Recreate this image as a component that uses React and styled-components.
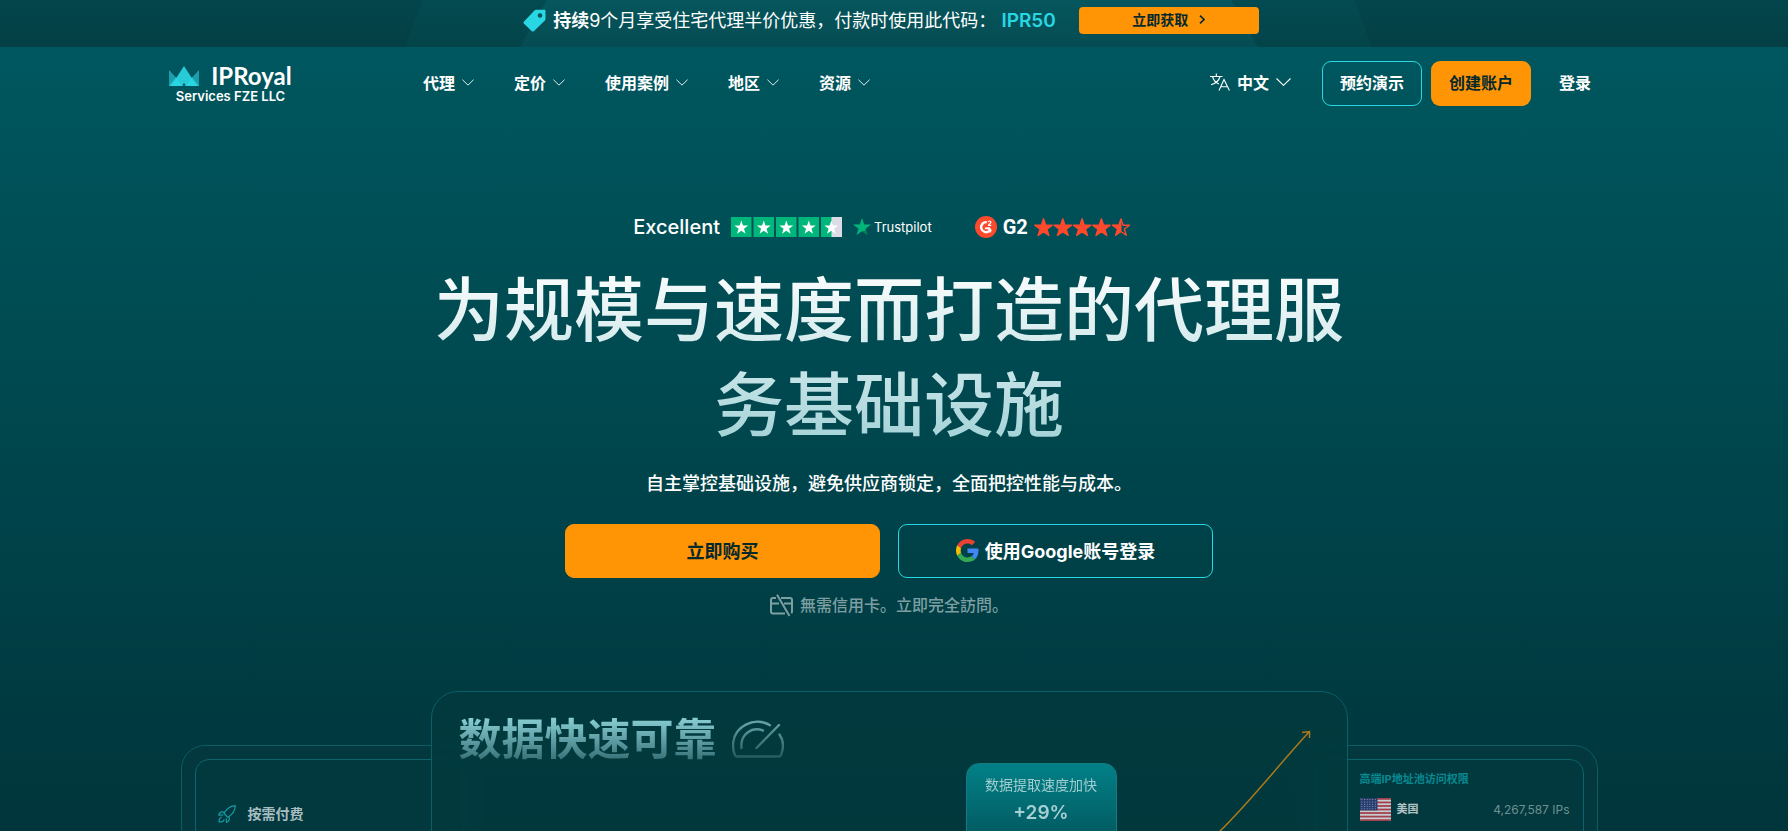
import React from 'react';
import styled, { createGlobalStyle } from 'styled-components';

const navItems = ['代理', '定价', '使用案例', '地区', '资源'];
const STAR = 'M0 -10 L2.3 -3.1 L9.5 -3.1 L3.7 1.2 L5.9 8.1 L0 3.9 L-5.9 8.1 L-3.7 1.2 L-9.5 -3.1 L-2.3 -3.1 Z';

const Chevron = ({ width = 12 }) => (
  <svg width={width} height={width === 12 ? 7 : 8} viewBox="0 0 15 8" fill="none" stroke="#fff" strokeWidth="1.1" aria-hidden="true">
    <path d="M.5 .5 7.5 7.3 14.5 .5" />
  </svg>
);

const TagIcon = () => (
  <svg width="23" height="23" viewBox="0 0 23 23" aria-hidden="true">
    <path
      fill="#28d7e3"
      fillRule="evenodd"
      d="M13 .7H21.5Q22.5 .7 22.5 1.7V10Q22.5 10.8 21.9 11.4L10.8 22.2Q9.8 23 8.800 22.2L.8 14.600Q0 13.600 .8 12.800L11.700 1.300Q12.300 .7 13 .7ZM17 4.200A2.300 2.300 0 1 0 17 8.800A2.300 2.300 0 1 0 17 4.200Z"
    />
  </svg>
);

const Crown = () => (
  <svg width="30" height="20" viewBox="0 0 30 20" aria-hidden="true">
    <path fill="#1b9dab" d="M0 4 15 20H0ZM30 4 15 20H30Z" />
    <path fill="#27cbd7" d="M15 0 28 20H17.5L15 17 12.500 20H2Z" />
    <path fill="#29dbe8" opacity=".7" d="M0 20 7 11.500 13 19.200 12.500 20ZM30 20 23 11.500 17 19.200 17.500 20Z" />
  </svg>
);

const TranslateIcon = () => (
  <svg width="20" height="18" viewBox="0 0 20 18" fill="none" stroke="#fff" strokeWidth="1.1" aria-hidden="true">
    <path d="M0 3.500H12.500M6.300 .5V3.500M2.500 3.500C3.600 7.500 6.500 10 9 11M10 3.500C9 7.500 5.500 10.500 1 11.800M9 17.500 14 6.500 19.400 17.500M10.800 13.800H17.600" />
  </svg>
);

const TrustpilotStars = () => (
  <svg width="111" height="20" viewBox="0 0 111 20" role="img" aria-label="4.5 / 5">
    {[0, 22.5, 45, 67.5, 90].map((x, i) => (
      <g key={x}>
        <rect x={x} width={i === 4 ? 11 : 20.5} height="20" fill="#00b67a" />
        {i === 4 && <rect x={x + 10.5} width="10.5" height="20" fill="#dcdce6" />}
        <path d={STAR} fill="#fff" transform={`translate(${x + 10.3} 10.8) scale(.73)`} />
      </g>
    ))}
  </svg>
);

const G2Logo = () => (
  <svg width="22" height="22" viewBox="0 0 22 22" aria-hidden="true">
    <circle cx="11" cy="11" r="11" fill="#ff492c" />
    <path d="M11.800 6.200A5 5 0 1 0 14.300 15" fill="none" stroke="#fff" strokeWidth="2.400" />
    <path d="M10.500 11.200H14.800L16.800 14.600 15.200 17 13 13.200H9.500Z" fill="#fff" />
    <path d="M13.200 6.200Q13.500 5 14.600 5 15.900 5 15.900 6.200 15.900 7 14.700 7.700 13.500 8.500 13.500 9.300H16.200" fill="none" stroke="#fff" strokeWidth="1.200" />
  </svg>
);

const G2Stars = () => (
  <svg width="97" height="20" viewBox="0 0 97 20" stroke="#ff492c" role="img" aria-label="4.5 / 5">
    {[9.5, 28.8, 48.1, 67.4].map((x) => (
      <path key={x} d={STAR} fill="#ff492c" strokeWidth="1.500" strokeLinejoin="round" transform={`translate(${x} 11) scale(.92)`} />
    ))}
    <g transform="translate(87 11) scale(.9)">
      <path d={STAR} fill="none" strokeWidth="1.500" strokeLinejoin="round" />
      <path d="M0 -10 V3.900 L-5.900 8.100 L-3.700 1.200 L-9.500 -3.100 L-2.300 -3.100 Z" fill="#ff492c" />
    </g>
  </svg>
);

const GoogleIcon = () => (
  <svg width="23" height="23" viewBox="0 0 48 48" aria-hidden="true">
    <path fill="#ea4335" d="M24 9.500c3.540 0 6.710 1.220 9.210 3.600l6.850-6.850C35.900 2.380 30.470 0 24 0 14.620 0 6.510 5.380 2.560 13.220l7.980 6.190C12.430 13.720 17.740 9.500 24 9.500z" />
    <path fill="#4285f4" d="M46.980 24.550c0-1.570-.15-3.090-.38-4.550H24v9.020h12.940c-.58 2.960-2.260 5.480-4.780 7.180l7.730 6c4.510-4.180 7.090-10.360 7.090-17.650z" />
    <path fill="#fbbc05" d="M10.530 28.590c-.48-1.450-.76-2.990-.76-4.590s.27-3.140.76-4.590l-7.980-6.190C.92 16.460 0 20.120 0 24s.92 7.540 2.560 10.780l7.970-6.190z" />
    <path fill="#34a853" d="M24 48c6.480 0 11.930-2.130 15.890-5.810l-7.730-6c-2.150 1.450-4.920 2.300-8.160 2.300-6.260 0-11.570-4.220-13.470-9.910l-7.980 6.190C6.510 42.620 14.620 48 24 48z" />
  </svg>
);

const NoCardIcon = () => (
  <svg width="23" height="23" viewBox="0 0 23 23" fill="none" stroke="currentColor" strokeWidth="2" aria-hidden="true">
    <path d="M6 4H3Q1 4 1 6V17.500Q1 19.500 3 19.500H15M11 4H20Q22 4 22 6V17.500Q22 18.500 21.300 19.200M1 9.500H9M14 9.500H22M7 .8 19.500 22" />
  </svg>
);

const GaugeIcon = () => (
  <svg width="52" height="38" viewBox="0 0 52 38" fill="none" stroke="url(#gauge)" strokeWidth="2.400" strokeLinecap="round" aria-hidden="true">
    <defs>
      <linearGradient id="gauge" x1="0" y1="0" x2="0" y2="38" gradientUnits="userSpaceOnUse">
        <stop stopColor="#68a6ab" />
        <stop offset="1" stopColor="#245a60" />
      </linearGradient>
    </defs>
    <path d="M38 5.200C23 -4 1 6 1 26Q1 31 3.200 35.500Q3.600 36.500 5 36.500H47Q48.400 36.500 48.800 35.500C52 28 52 21 47.500 14.500M9.500 28C8 14 20 6.500 31 10.500M24.500 28 47 5" />
  </svg>
);

const RocketIcon = () => (
  <svg width="18" height="18" viewBox="0 0 18 18" fill="none" stroke="#169ba4" strokeWidth="1.200" strokeLinejoin="round" aria-hidden="true">
    <path d="M6 8.500Q9.500 1.500 17.300 .7 17 8 9.800 12.200L6 8.500ZM6.600 7.500C4 6 1.500 7 .7 10.200L5.200 9.800M10.800 11.700C12 14 11 16.300 8.500 17.500L8.200 13.200M3.800 12C1.800 12.500 1 14.500 1 17 3.500 17 5.800 16.500 6.200 14.300" />
  </svg>
);

const Flag = () => (
  <svg width="31" height="23" viewBox="0 0 31 23" aria-hidden="true">
    <clipPath id="flag">
      <rect width="31" height="23" rx="2" />
    </clipPath>
    <g clipPath="url(#flag)">
      <rect width="31" height="23" fill="#c5cdd0" />
      {[0, 2, 4, 6, 8, 10, 12].map((i) => (
        <rect key={i} y={i * 1.77} width="31" height="1.77" fill="#a33e4c" />
      ))}
      <rect width="17.500" height="12.400" fill="#283e70" />
      {[0, 1, 2, 3, 4].map((r) =>
        [0, 1, 2, 3, 4, 5].map((c) => (
          <circle key={`${r}-${c}`} cx={1.8 + c * 2.7} cy={1.6 + r * 2.3} r=".5" fill="#9aa7bd" />
        ))
      )}
    </g>
  </svg>
);

const App = () => {
  return (
    <Page>
      <GlobalStyle />
      <Banner>
        <Promo>
          <TagIcon />
          <PromoText>
            <b>持续</b>9个月享受住宅代理半价优惠，付款时使用此代码： <Code>IPR50</Code>
          </PromoText>
        </Promo>
        <PromoButton type="button">
          立即获取
          <svg width="6" height="9" viewBox="0 0 6 9" fill="none" stroke="currentColor" strokeWidth="1.600" aria-hidden="true">
            <path d="M1 .7 5 4.500 1 8.300" />
          </svg>
        </PromoButton>
      </Banner>
      <Header>
        <Logo href="#">
          <LogoRow>
            <Crown />
            IPRoyal
          </LogoRow>
          <LogoSub>Services FZE LLC</LogoSub>
        </Logo>
        <Nav>
          {navItems.map((item) => (
            <NavButton type="button" key={item}>
              {item}
              <Chevron />
            </NavButton>
          ))}
        </Nav>
        <Language type="button">
          <TranslateIcon />
          中文
          <Chevron width={15} />
        </Language>
        <Actions>
          <SmallLink href="#" $outline>
            预约演示
          </SmallLink>
          <SmallLink href="#" $filled>
            创建账户
          </SmallLink>
          <SmallLink href="#">登录</SmallLink>
        </Actions>
      </Header>
      <Hero>
        <Ratings>
          <Trustpilot>
            <Excellent>Excellent</Excellent>
            <TrustpilotStars />
            <TrustpilotName>
              <svg width="18" height="18" viewBox="0 0 18 18" aria-hidden="true">
                <path d={STAR} fill="#00b67a" transform="translate(9 9.500) scale(.94)" />
                <path d="M9 13.200 12.900 12.200 14.500 17Z" fill="#005128" opacity=".5" />
              </svg>
              Trustpilot
            </TrustpilotName>
          </Trustpilot>
          <G2>
            <G2Logo />
            <span>G2</span>
            <G2Stars />
          </G2>
        </Ratings>
        <Title>为规模与速度而打造的代理服务基础设施</Title>
        <Subtitle>自主掌控基础设施，避免供应商锁定，全面把控性能与成本。</Subtitle>
        <Buttons>
          <BigButton type="button" $filled>
            立即购买
          </BigButton>
          <BigButton type="button">
            <GoogleIcon />
            使用Google账号登录
          </BigButton>
        </Buttons>
        <Note>
          <NoCardIcon />
          無需信用卡。立即完全訪問。
        </Note>
      </Hero>
      <Cards>
        <SideCard>
          <SideInner>
            <PlanRow>
              <RocketIcon />
              按需付费
            </PlanRow>
          </SideInner>
        </SideCard>
        <SideCard $right>
          <SideInner $right>
            <PoolTitle>高端IP地址池访问权限</PoolTitle>
            <Country>
              <Flag />
              <b>美国</b>
              <span>4,267,587 IPs</span>
            </Country>
          </SideInner>
        </SideCard>
        <MainCard>
          <MainTitle>
            <span>数据快速可靠</span>
            <GaugeIcon />
          </MainTitle>
          <Curve viewBox="0 0 300 210" fill="none" stroke="#aa7a1b" strokeWidth="1.500" aria-hidden="true">
            <path d="M1 207C90 190 160 147 207 102 236 74 264 38 297 2M290 2.500 297.500 1.500 297.500 8" />
          </Curve>
          <Tooltip>
            <span>数据提取速度加快</span>
            <strong>+29%</strong>
          </Tooltip>
        </MainCard>
      </Cards>
    </Page>
  );
};
export default App;

const GlobalStyle = createGlobalStyle`
  * {
    box-sizing: border-box;
  }
  body {
    margin: 0;
    background: #00353b;
    color: #fff;
    font-family: Inter, 'Noto Sans CJK SC', sans-serif;
  }
  button {
    font-family: inherit;
    color: inherit;
    cursor: pointer;
  }
  a {
    color: inherit;
    text-decoration: none;
  }
  svg {
    flex-shrink: 0;
  }
`;

const Page = styled.div`
  height: 100vh;
  overflow: hidden;
  padding-right: 10px;
  background: linear-gradient(180deg, #00575f 47px, #00353b 100%);
`;

const Banner = styled.div`
  position: relative;
  z-index: 0;
  display: flex;
  justify-content: center;
  gap: 23px;
  height: 47px;
  margin-right: -10px;
  padding: 7px 6px 0 0;
  background: linear-gradient(180deg, #03464c, #033f44);
  &::before,
  &::after {
    content: '';
    position: absolute;
    z-index: -1;
    top: 0;
    bottom: 0;
    left: calc(50% - 489px);
    width: 967px;
    background: linear-gradient(180deg, #034b51, #034449);
    clip-path: polygon(18px 0, calc(100% - 18px) 0, 100% 100%, 0 100%);
  }
  &::after {
    left: calc(50% - 374px);
    width: 738px;
    background: linear-gradient(180deg, #06565d, #054c52);
    clip-path: polygon(27px 0, calc(100% - 27px) 0, 100% 100%, 0 100%);
  }
`;

const Promo = styled.div`
  display: flex;
  align-items: center;
  gap: 7px;
  height: 27px;
`;

const PromoText = styled.span`
  font-size: 18px;
  line-height: 27px;
  white-space: nowrap;
`;

const Code = styled.b`
  color: #28d7e3;
  font-size: 19px;
  font-weight: 600;
`;

const PromoButton = styled.button`
  display: flex;
  align-items: center;
  justify-content: center;
  gap: 11px;
  width: 180px;
  height: 27px;
  padding: 0 0 3px;
  border: none;
  border-radius: 4px;
  background: #ff9404;
  color: #04292d;
  font-size: 14px;
  font-weight: 700;
`;

const Header = styled.header`
  display: flex;
  align-items: center;
  max-width: 1442px;
  height: 72px;
  margin: 0 auto;
  font-size: 16px;
  font-weight: 700;
`;

const Logo = styled.a`
  display: flex;
  flex-direction: column;
  align-items: center;
  width: 125px;
  padding-top: 1px;
`;

const LogoRow = styled.span`
  display: flex;
  align-items: center;
  gap: 12px;
  font-family: Lato, sans-serif;
  font-size: 24px;
  line-height: 24px;
`;

const LogoSub = styled.span`
  font-size: 13px;
  font-weight: 600;
  line-height: 16px;
`;

const Nav = styled.nav`
  display: flex;
  gap: 40px;
  margin-left: 130px;
  padding-bottom: 2px;
`;

const NavButton = styled.button`
  display: flex;
  align-items: center;
  gap: 7px;
  padding: 0;
  border: none;
  background: none;
  font-size: 16px;
  font-weight: 700;
`;

const Language = styled(NavButton)`
  margin-left: auto;
  margin-right: 31px;
  padding-bottom: 2px;
`;

const Actions = styled.div`
  display: flex;
  gap: 9px;
`;

const SmallLink = styled.a`
  display: flex;
  align-items: center;
  height: 45px;
  padding: 0 ${({ $outline, $filled }) => ($outline || $filled ? 17 : 18)}px 2px;
  border: 1px solid ${({ $outline }) => ($outline ? '#28d7e3' : 'transparent')};
  border-radius: 9px;
  background: ${({ $filled }) => ($filled ? '#ff9404 border-box' : 'none')};
  color: ${({ $filled }) => ($filled ? '#04292d' : '#fff')};
`;

const Hero = styled.main`
  display: flex;
  flex-direction: column;
  align-items: center;
  max-width: 915px;
  margin: 0 auto;
  padding-top: 96px;
`;

const Ratings = styled.div`
  display: flex;
  align-items: center;
  gap: 43px;
  height: 24px;
  margin-right: 14px;
`;

const Trustpilot = styled.div`
  display: flex;
  align-items: center;
  gap: 11px;
`;

const Excellent = styled.span`
  font-size: 20px;
  font-weight: 500;
`;

const TrustpilotName = styled.span`
  display: flex;
  align-items: center;
  gap: 3px;
  font-size: 13px;
`;

const G2 = styled.div`
  display: flex;
  align-items: center;
  gap: 6px;
  font-family: Roboto, sans-serif;
  font-size: 20px;
  font-weight: 700;
`;

const Title = styled.h1`
  margin: 24px 0 0;
  background: linear-gradient(180deg, #fff 0%, #9dd0d5 100%);
  background-clip: text;
  color: transparent;
  font-size: 70px;
  font-weight: 500;
  line-height: 95px;
  text-align: center;
`;

const Subtitle = styled.p`
  margin: 17px 0 0;
  font-size: 18px;
  font-weight: 500;
  line-height: 27px;
`;

const Buttons = styled.div`
  display: grid;
  grid-template-columns: 1fr 1fr;
  gap: 18px;
  width: 648px;
  margin-top: 27px;
`;

const BigButton = styled.button`
  display: flex;
  align-items: center;
  justify-content: center;
  gap: 6px;
  height: 54px;
  padding: 0 0 2px;
  border: 1px solid ${({ $filled }) => ($filled ? '#ff9404' : '#28d7e3')};
  border-radius: 9px;
  background: ${({ $filled }) => ($filled ? '#ff9404' : 'transparent')};
  color: ${({ $filled }) => ($filled ? '#04292d' : '#fff')};
  font-size: 18px;
  font-weight: 700;
`;

const Note = styled.p`
  display: flex;
  align-items: center;
  gap: 7px;
  margin: 15px 0 0;
  color: #7d9fa2;
  font-size: 16px;
  font-weight: 500;
  line-height: 24px;
`;

const Cards = styled.section`
  display: grid;
  grid-template-columns: 250px 47px 1fr 47px 250px;
  grid-template-rows: 480px;
  max-width: 1417px;
  margin: 74px auto 0;
`;

const SideCard = styled.div`
  grid-row: 1;
  grid-column: ${({ $right }) => ($right ? '4 / 6' : '1 / 3')};
  margin-top: 54px;
  padding: 13px;
  border: 1px solid #0a5d63;
  border-radius: 24px;
  background: #02383e;
`;

const SideInner = styled.div`
  height: 100%;
  padding: ${({ $right }) => ($right ? '10px 13px 0 44px' : '42px 22px 0')};
  border: 1px solid #08666c;
  border-radius: 14px;
  background: #02393e;
`;

const PlanRow = styled.div`
  display: flex;
  align-items: center;
  gap: 12px;
  color: #a9bec0;
  font-size: 14px;
  font-weight: 700;
  line-height: 24px;
`;

const PoolTitle = styled.div`
  color: #078a92;
  font-size: 11px;
  font-weight: 700;
  line-height: 18px;
`;

const Country = styled.div`
  display: flex;
  align-items: center;
  gap: 6px;
  margin-top: 10px;
  color: #b5c5c7;
  font-size: 11px;
  line-height: 23px;
  span {
    margin-left: auto;
    color: #6f9092;
    font-size: 12px;
  }
`;

const MainCard = styled.div`
  position: relative;
  grid-row: 1;
  grid-column: 2 / 5;
  padding: 22px 27px;
  border: 1px solid #086067;
  border-radius: 27px;
  background: rgba(2, 57, 62, 0.75);
  backdrop-filter: blur(3px);
`;

const MainTitle = styled.h2`
  display: flex;
  align-items: center;
  gap: 15px;
  margin: 0;
  font-size: 43px;
  font-weight: 700;
  line-height: 50px;
  span {
    background: linear-gradient(180deg, #86ccd1 10%, #316970 100%);
    background-clip: text;
    color: transparent;
  }
`;

const Curve = styled.svg`
  position: absolute;
  top: 38px;
  right: 35px;
  width: 300px;
  height: 210px;
`;

const Tooltip = styled.div`
  position: absolute;
  top: 71px;
  right: 230px;
  display: flex;
  flex-direction: column;
  align-items: center;
  width: 151px;
  height: 90px;
  padding-top: 9px;
  border: 1px solid #167b80;
  border-radius: 13px;
  background: linear-gradient(180deg, #028087, #035259);
  color: #9fcdd0;
  font-size: 14px;
  line-height: 24px;
  strong {
    color: #a5cfd2;
    font-size: 19px;
    font-weight: 600;
    line-height: 32px;
  }
`;
